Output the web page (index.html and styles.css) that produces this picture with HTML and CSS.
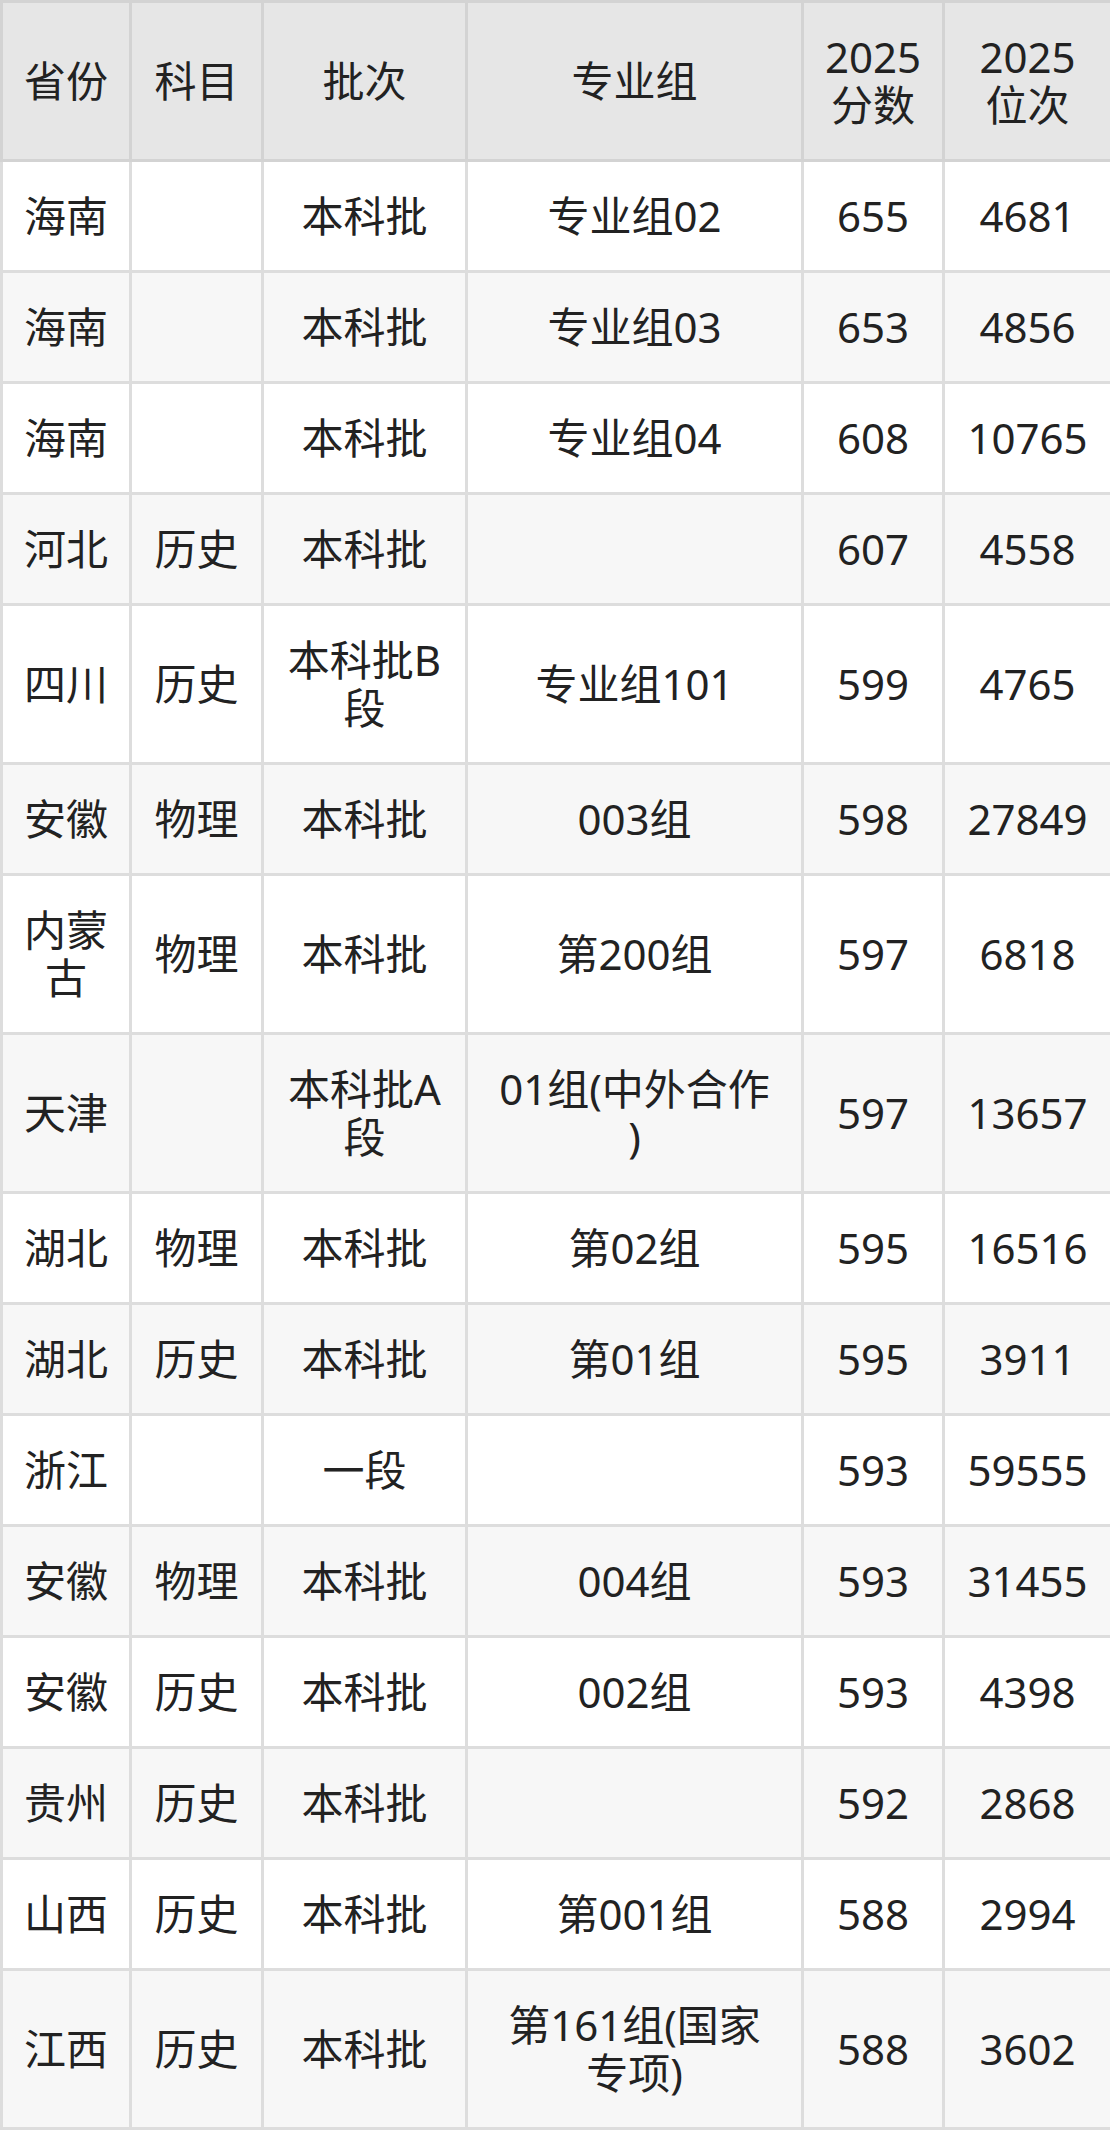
FILE: index.html
```html
<!DOCTYPE html>
<html lang="zh-CN">
<head>
<meta charset="utf-8">
<title>2025 分数 位次</title>
<link rel="stylesheet" href="styles.css">
</head>
<body>
<table class="score-table">
  <colgroup>
    <col class="c-prov">
    <col class="c-subj">
    <col class="c-batch">
    <col class="c-group">
    <col class="c-score">
    <col class="c-rank">
  </colgroup>
  <thead>
    <tr>
      <th>省份</th>
      <th>科目</th>
      <th>批次</th>
      <th>专业组</th>
      <th>2025<br>分数</th>
      <th>2025<br>位次</th>
    </tr>
  </thead>
  <tbody>
    <tr><td>海南</td><td></td><td>本科批</td><td>专业组02</td><td>655</td><td>4681</td></tr>
    <tr><td>海南</td><td></td><td>本科批</td><td>专业组03</td><td>653</td><td>4856</td></tr>
    <tr><td>海南</td><td></td><td>本科批</td><td>专业组04</td><td>608</td><td>10765</td></tr>
    <tr><td>河北</td><td>历史</td><td>本科批</td><td></td><td>607</td><td>4558</td></tr>
    <tr><td>四川</td><td>历史</td><td>本科批B<br>段</td><td>专业组101</td><td>599</td><td>4765</td></tr>
    <tr><td>安徽</td><td>物理</td><td>本科批</td><td>003组</td><td>598</td><td>27849</td></tr>
    <tr><td>内蒙<br>古</td><td>物理</td><td>本科批</td><td>第200组</td><td>597</td><td>6818</td></tr>
    <tr><td>天津</td><td></td><td>本科批A<br>段</td><td>01组(中外合作<br>)</td><td>597</td><td>13657</td></tr>
    <tr><td>湖北</td><td>物理</td><td>本科批</td><td>第02组</td><td>595</td><td>16516</td></tr>
    <tr><td>湖北</td><td>历史</td><td>本科批</td><td>第01组</td><td>595</td><td>3911</td></tr>
    <tr><td>浙江</td><td></td><td>一段</td><td></td><td>593</td><td>59555</td></tr>
    <tr><td>安徽</td><td>物理</td><td>本科批</td><td>004组</td><td>593</td><td>31455</td></tr>
    <tr><td>安徽</td><td>历史</td><td>本科批</td><td>002组</td><td>593</td><td>4398</td></tr>
    <tr><td>贵州</td><td>历史</td><td>本科批</td><td></td><td>592</td><td>2868</td></tr>
    <tr><td>山西</td><td>历史</td><td>本科批</td><td>第001组</td><td>588</td><td>2994</td></tr>
    <tr><td>江西</td><td>历史</td><td>本科批</td><td>第161组(国家<br>专项)</td><td>588</td><td>3602</td></tr>
  </tbody>
</table>
</body>
</html>
```
FILE: styles.css
```css
html, body {
  margin: 0;
  padding: 0;
  background: #ffffff;
}

.score-table {
  width: 1110px;
  table-layout: fixed;
  border-collapse: collapse;
  font-family: "Noto Sans", "Noto Sans CJK SC", sans-serif;
  font-size: 42px;
  line-height: 48px;
  color: #222222;
}

.c-prov { width: 129px; }
.c-subj { width: 132px; }
.c-batch { width: 204px; }
.c-group { width: 336px; }
.c-score { width: 141px; }
.c-rank { width: 168px; }

.score-table th,
.score-table td {
  padding: 30px 4px;
  text-align: center;
  vertical-align: middle;
  white-space: nowrap;
  font-weight: normal;
}

.score-table th {
  background: #e6e6e6;
  border: 3px solid #d3d3d3;
}

.score-table td {
  border: 3px solid #dddddd;
}

.score-table tbody tr:nth-child(odd) td {
  background: #ffffff;
}

.score-table tbody tr:nth-child(even) td {
  background: #f7f7f7;
}
```
